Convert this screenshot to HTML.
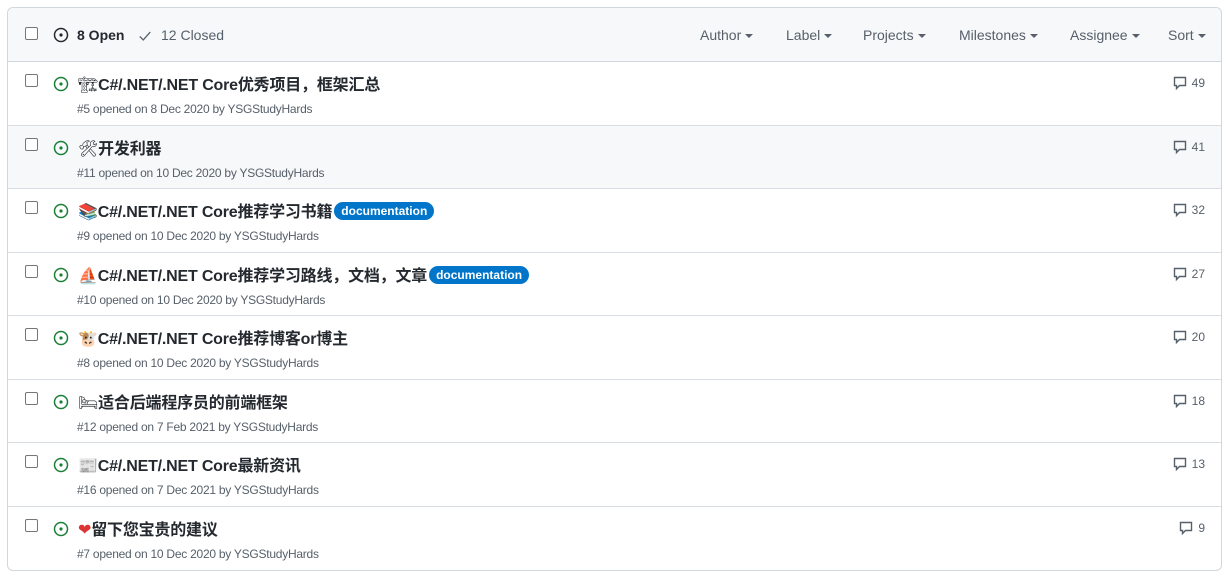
<!DOCTYPE html>
<html><head><meta charset="utf-8"><style>
*{box-sizing:border-box;margin:0;padding:0}
body{width:1232px;height:576px;background:#fff;font-family:"Liberation Sans","Noto Sans CJK SC",sans-serif;color:#24292f;position:relative;overflow:hidden}
.box{position:absolute;left:7px;top:7px;width:1215px;height:564px;border:1px solid #d0d7de;border-radius:6px;overflow:hidden}
.hdr{height:54px;background:#f6f8fa;border-bottom:1px solid #d0d7de;position:relative;font-size:14px}
.cb{position:absolute;width:13px;height:13px;border:1px solid #767676;border-radius:2px;background:#fff}
.row{position:relative;height:63.5px;border-bottom:1px solid #d8dee4}
.row:last-child{border-bottom:none}
.row.hl{background:#f6f8fa}
.t{position:absolute;left:70px;top:9px;font-size:16px;font-weight:600;white-space:nowrap;color:#24292f;letter-spacing:-0.2px}
.m{position:absolute;left:69px;top:40px;font-size:12px;color:#57606a;white-space:nowrap;letter-spacing:-0.25px}
.ic{position:absolute;left:45px;top:14px}
.lab{display:inline-block;background:#0075ca;color:#fff;font-size:12px;font-weight:600;padding:0 7px;border-radius:10px;line-height:18px;vertical-align:2px;margin-left:2px;letter-spacing:0}
.c{position:absolute;right:16px;top:13px;font-size:12px;color:#57606a;display:flex;align-items:center;gap:4px}
.f{position:absolute;top:19px;color:#57606a;white-space:nowrap}
.f:after{content:"";display:inline-block;border:4px solid transparent;border-top-color:#57606a;margin-left:4px;vertical-align:-2px}
.e{font-weight:400}
</style></head><body><div class="box">
<div class="hdr">
<div class="cb" style="left:17px;top:19px"></div>
<svg style="position:absolute;left:45px;top:19px" width="16" height="16" viewBox="0 0 16 16"><circle cx="8" cy="8" r="6.5" fill="none" stroke="#24292f" stroke-width="1.5"/><circle cx="8" cy="8" r="1.6" fill="#24292f"/></svg>
<span style="position:absolute;left:69px;top:19px;font-weight:600">8 Open</span>
<svg style="position:absolute;left:130px;top:21px" width="14" height="14" viewBox="0 0 16 16"><path d="M2 8.5l4 4 8-9" fill="none" stroke="#57606a" stroke-width="1.5"/></svg>
<span style="position:absolute;left:153px;top:19px;color:#57606a">12 Closed</span>
<span class="f" style="left:692px">Author</span>
<span class="f" style="left:778px">Label</span>
<span class="f" style="left:855px">Projects</span>
<span class="f" style="left:951px">Milestones</span>
<span class="f" style="left:1062px">Assignee</span>
<span class="f" style="left:1160px">Sort</span>
</div>
<div class="row"><div class="cb" style="left:17px;top:12px"></div><svg class="ic" width="16" height="16" viewBox="0 0 16 16"><circle cx="8" cy="8" r="6.5" fill="none" stroke="#1a7f37" stroke-width="1.5"/><circle cx="8" cy="8" r="1.6" fill="#1a7f37"/></svg><div class="t"><span class="e">🏗</span>C#/.NET/.NET Core优秀项目，框架汇总</div><div class="m">#5 opened on 8 Dec 2020 by YSGStudyHards</div><div class="c"><svg width="16" height="16" viewBox="0 0 16 16"><path d="M2.5 2.5h11v8h-6l-3 3v-3h-2z" fill="none" stroke="#57606a" stroke-width="1.4"/></svg>49</div></div>
<div class="row hl"><div class="cb" style="left:17px;top:12px"></div><svg class="ic" width="16" height="16" viewBox="0 0 16 16"><circle cx="8" cy="8" r="6.5" fill="none" stroke="#1a7f37" stroke-width="1.5"/><circle cx="8" cy="8" r="1.6" fill="#1a7f37"/></svg><div class="t"><span class="e">🛠</span>开发利器</div><div class="m">#11 opened on 10 Dec 2020 by YSGStudyHards</div><div class="c"><svg width="16" height="16" viewBox="0 0 16 16"><path d="M2.5 2.5h11v8h-6l-3 3v-3h-2z" fill="none" stroke="#57606a" stroke-width="1.4"/></svg>41</div></div>
<div class="row"><div class="cb" style="left:17px;top:12px"></div><svg class="ic" width="16" height="16" viewBox="0 0 16 16"><circle cx="8" cy="8" r="6.5" fill="none" stroke="#1a7f37" stroke-width="1.5"/><circle cx="8" cy="8" r="1.6" fill="#1a7f37"/></svg><div class="t"><span class="e">📚</span>C#/.NET/.NET Core推荐学习书籍<span class="lab">documentation</span></div><div class="m">#9 opened on 10 Dec 2020 by YSGStudyHards</div><div class="c"><svg width="16" height="16" viewBox="0 0 16 16"><path d="M2.5 2.5h11v8h-6l-3 3v-3h-2z" fill="none" stroke="#57606a" stroke-width="1.4"/></svg>32</div></div>
<div class="row"><div class="cb" style="left:17px;top:12px"></div><svg class="ic" width="16" height="16" viewBox="0 0 16 16"><circle cx="8" cy="8" r="6.5" fill="none" stroke="#1a7f37" stroke-width="1.5"/><circle cx="8" cy="8" r="1.6" fill="#1a7f37"/></svg><div class="t"><span class="e">⛵</span>C#/.NET/.NET Core推荐学习路线，文档，文章<span class="lab">documentation</span></div><div class="m">#10 opened on 10 Dec 2020 by YSGStudyHards</div><div class="c"><svg width="16" height="16" viewBox="0 0 16 16"><path d="M2.5 2.5h11v8h-6l-3 3v-3h-2z" fill="none" stroke="#57606a" stroke-width="1.4"/></svg>27</div></div>
<div class="row"><div class="cb" style="left:17px;top:12px"></div><svg class="ic" width="16" height="16" viewBox="0 0 16 16"><circle cx="8" cy="8" r="6.5" fill="none" stroke="#1a7f37" stroke-width="1.5"/><circle cx="8" cy="8" r="1.6" fill="#1a7f37"/></svg><div class="t"><span class="e">🐮</span>C#/.NET/.NET Core推荐博客or博主</div><div class="m">#8 opened on 10 Dec 2020 by YSGStudyHards</div><div class="c"><svg width="16" height="16" viewBox="0 0 16 16"><path d="M2.5 2.5h11v8h-6l-3 3v-3h-2z" fill="none" stroke="#57606a" stroke-width="1.4"/></svg>20</div></div>
<div class="row"><div class="cb" style="left:17px;top:12px"></div><svg class="ic" width="16" height="16" viewBox="0 0 16 16"><circle cx="8" cy="8" r="6.5" fill="none" stroke="#1a7f37" stroke-width="1.5"/><circle cx="8" cy="8" r="1.6" fill="#1a7f37"/></svg><div class="t"><span class="e">🛏</span>适合后端程序员的前端框架</div><div class="m">#12 opened on 7 Feb 2021 by YSGStudyHards</div><div class="c"><svg width="16" height="16" viewBox="0 0 16 16"><path d="M2.5 2.5h11v8h-6l-3 3v-3h-2z" fill="none" stroke="#57606a" stroke-width="1.4"/></svg>18</div></div>
<div class="row"><div class="cb" style="left:17px;top:12px"></div><svg class="ic" width="16" height="16" viewBox="0 0 16 16"><circle cx="8" cy="8" r="6.5" fill="none" stroke="#1a7f37" stroke-width="1.5"/><circle cx="8" cy="8" r="1.6" fill="#1a7f37"/></svg><div class="t"><span class="e">📰</span>C#/.NET/.NET Core最新资讯</div><div class="m">#16 opened on 7 Dec 2021 by YSGStudyHards</div><div class="c"><svg width="16" height="16" viewBox="0 0 16 16"><path d="M2.5 2.5h11v8h-6l-3 3v-3h-2z" fill="none" stroke="#57606a" stroke-width="1.4"/></svg>13</div></div>
<div class="row"><div class="cb" style="left:17px;top:12px"></div><svg class="ic" width="16" height="16" viewBox="0 0 16 16"><circle cx="8" cy="8" r="6.5" fill="none" stroke="#1a7f37" stroke-width="1.5"/><circle cx="8" cy="8" r="1.6" fill="#1a7f37"/></svg><div class="t"><span class="e" style="color:#d33">❤</span>留下您宝贵的建议</div><div class="m">#7 opened on 10 Dec 2020 by YSGStudyHards</div><div class="c"><svg width="16" height="16" viewBox="0 0 16 16"><path d="M2.5 2.5h11v8h-6l-3 3v-3h-2z" fill="none" stroke="#57606a" stroke-width="1.4"/></svg>9</div></div>
</div></body></html>
